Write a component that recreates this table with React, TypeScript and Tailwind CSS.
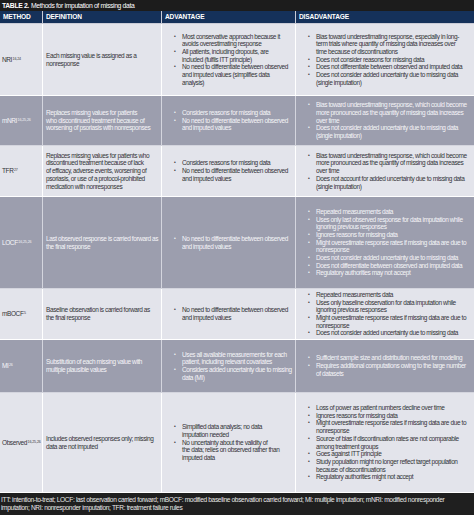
import React from "react";

type Row = {
  method: string;
  sup: string;
  h: string;
  shade: "light" | "dark";
  def: string[];
  adv: string[][];
  dis: string[][];
};

const rows: Row[] = [
  {
    method: "NRI",
    sup: "16,24",
    h: "h-[72px]",
    shade: "light",
    def: ["Each missing value is assigned as a", "nonresponse"],
    adv: [
      ["Most conservative approach because it", "avoids overestimating response"],
      ["All patients, including dropouts, are", "included (fulfils ITT principle)"],
      ["No need to differentiate between observed", "and imputed values (simplifies data", "analysis)"],
    ],
    dis: [
      [
        "Bias toward underestimating response, especially in long-",
        "term trials where quantity of missing data increases over",
        "time because of discontinuations",
      ],
      ["Does not consider reasons for missing data"],
      ["Does not differentiate between observed and imputed data"],
      ["Does not consider added uncertainty due to missing data", "(single imputation)"],
    ],
  },
  {
    method: "mNRI",
    sup: "16,25,26",
    h: "h-[50px]",
    shade: "dark",
    def: [
      "Replaces missing values for patients",
      "who discontinued treatment because of",
      "worsening of psoriasis with nonresponses",
    ],
    adv: [["Considers reasons for missing data"], ["No need to differentiate between observed", "and imputed values"]],
    dis: [
      [
        "Bias toward underestimating response, which could become",
        "more pronounced as the quantity of missing data increases",
        "over time",
      ],
      ["Does not consider added uncertainty due to missing data", "(single imputation)"],
    ],
  },
  {
    method: "TFR",
    sup: "27",
    h: "h-[51px]",
    shade: "light",
    def: [
      "Replaces missing values for patients who",
      "discontinued treatment because of lack",
      "of efficacy, adverse events, worsening of",
      "psoriasis, or use of a protocol-prohibited",
      "medication with nonresponses",
    ],
    adv: [["Considers reasons for missing data"], ["No need to differentiate between observed", "and imputed values"]],
    dis: [
      [
        "Bias toward underestimating response, which could become",
        "more pronounced as the quantity of missing data increases",
        "over time",
      ],
      ["Does not account for added uncertainty due to missing data", "(single imputation)"],
    ],
  },
  {
    method: "LOCF",
    sup: "16,25,26",
    h: "h-[92px]",
    shade: "dark",
    def: ["Last observed response is carried forward as", "the final response"],
    adv: [["No need to differentiate between observed", "and imputed values"]],
    dis: [
      ["Repeated measurements data"],
      ["Uses only last observed response for data imputation while", "ignoring previous responses"],
      ["Ignores reasons for missing data"],
      ["Might overestimate response rates if missing data are due to", "nonresponse"],
      ["Does not consider added uncertainty due to missing data"],
      ["Does not differentiate between observed and imputed data"],
      ["Regulatory authorities may not accept"],
    ],
  },
  {
    method: "mBOCF",
    sup: "5",
    h: "h-[51px]",
    shade: "light",
    def: ["Baseline observation is carried forward as", "the final response"],
    adv: [["No need to differentiate between observed", "and imputed values"]],
    dis: [
      ["Repeated measurements data"],
      ["Uses only baseline observation for data imputation while", "ignoring previous responses"],
      ["Might overestimate response rates if missing data are due to", "nonresponse"],
      ["Does not consider added uncertainty due to missing data"],
    ],
  },
  {
    method: "MI",
    sup: "26",
    h: "h-[53px]",
    shade: "dark",
    def: ["Substitution of each missing value with", "multiple plausible values"],
    adv: [
      ["Uses all available measurements for each", "patient, including relevant covariates"],
      ["Considers added uncertainty due to missing", "data (MI)"],
    ],
    dis: [
      ["Sufficient sample size and distribution needed for modeling"],
      ["Requires additional computations owing to the large number", "of datasets"],
    ],
  },
  {
    method: "Observed",
    sup: "16,25,26",
    h: "h-[100px]",
    shade: "light",
    def: ["Includes observed responses only; missing", "data are not imputed"],
    adv: [
      ["Simplified data analysis; no data", "imputation needed"],
      ["No uncertainty about the validity of", "the data; relies on observed rather than", "imputed data"],
    ],
    dis: [
      ["Loss of power as patient numbers decline over time"],
      ["Ignores reasons for missing data"],
      ["Might overestimate response rates if missing data are due to", "nonresponse"],
      ["Source of bias if discontinuation rates are not comparable", "among treatment groups"],
      ["Goes against ITT principle"],
      ["Study population might no longer reflect target population", "because of discontinuations"],
      ["Regulatory authorities might not accept"],
    ],
  },
];

function Lines({ lines }: { lines: string[] }) {
  return (
    <div>
      {lines.map((l, i) => (
        <div key={i} className="whitespace-nowrap">
          {l}
        </div>
      ))}
    </div>
  );
}

function Bullets({ items }: { items: string[][] }) {
  return (
    <div className="flex flex-col">
      {items.map((it, i) => (
        <div key={i} className="flex">
          <span className="w-[8px] shrink-0 text-[5px]">•</span>
          <Lines lines={it} />
        </div>
      ))}
    </div>
  );
}

export default function App() {
  return (
    <div
      className="w-[474px] h-[515px] overflow-hidden bg-[#e3e4eb] text-[6.5px] leading-[7.7px] tracking-[-0.4px]"
      style={{ fontFamily: '"Liberation Sans", Arial, sans-serif' }}
    >
      {/* title */}
      <div className="h-[11px] bg-[#1c1c1c] text-white flex items-center px-[2px] text-[6.8px] tracking-[-0.35px]">
        <span className="font-bold mr-[2px]">TABLE 2.</span>
        <span>Methods for imputation of missing data</span>
      </div>

      {/* header */}
      <div className="h-[13px] bg-[#15315a] text-white font-bold uppercase text-[6.6px] tracking-[-0.15px] grid grid-cols-[43px_119px_134px_178px] border-b border-[#c9cbd6]">
        <div className="flex items-center pl-[3px] border-r border-[#c9cbd6]">Method</div>
        <div className="flex items-center pl-[3px] border-r border-[#c9cbd6]">Definition</div>
        <div className="flex items-center pl-[3px] border-r border-[#c9cbd6]">Advantage</div>
        <div className="flex items-center pl-[3px]">Disadvantage</div>
      </div>

      {rows.map((r) => {
        const dark = r.shade === "dark";
        return (
          <div
            key={r.method}
            className={`${r.h} grid grid-cols-[43px_119px_134px_178px] border-b ${
              dark ? "bg-[#9c9eae] text-[#f5f5f8] border-[#d4d5de]" : "bg-[#e3e4eb] text-[#333338] border-white"
            }`}
          >
            <div className={`flex items-center pl-[2px] border-r ${dark ? "border-[#d4d5de]" : "border-white"}`}>
              <span className="whitespace-nowrap">
                {r.method}
                <sup className="text-[3.6px] tracking-[-0.1px] ml-[0.5px]">{r.sup}</sup>
              </span>
            </div>
            <div className={`flex items-center pl-[3px] border-r ${dark ? "border-[#d4d5de]" : "border-white"}`}>
              <Lines lines={r.def} />
            </div>
            <div className={`flex items-center pl-[12px] border-r ${dark ? "border-[#d4d5de]" : "border-white"}`}>
              <Bullets items={r.adv} />
            </div>
            <div className="flex items-center pl-[12px]">
              <Bullets items={r.dis} />
            </div>
          </div>
        );
      })}

      {/* footnote */}
      <div className="h-[22px] bg-[#1f1f1f] text-[#e8e8e8] px-[1px] pt-[3px] text-[6.6px] tracking-[-0.35px] leading-[8px]">
        <div className="whitespace-nowrap">
          ITT: intention-to-treat; LOCF: last observation carried forward; mBOCF: modified baseline observation carried
          forward; MI: multiple imputation; mNRI: modified nonresponder
        </div>
        <div className="whitespace-nowrap">imputation; NRI: nonresponder imputation; TFR: treatment failure rules</div>
      </div>
    </div>
  );
}
